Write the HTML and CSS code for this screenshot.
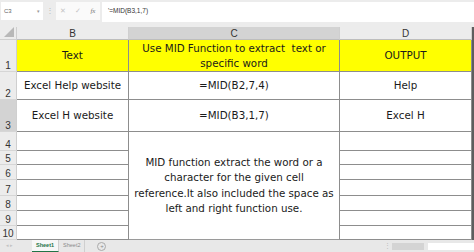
FILE: index.html
```html
<!DOCTYPE html>
<html lang="en">
<head>
    <meta charset="UTF-8">
    <title>MID Function</title>
    <link rel="stylesheet" href="styles.css">
</head>
<body>
    <div class="app">
        <div class="formula-bar">
            <div class="name-box"><span>C3</span><span class="caret">▾</span></div>
            <div class="grip">⋮</div>
            <div class="fx-buttons"><span>✕</span><span>✓</span><span class="fx">fx</span></div>
            <div class="formula">'=MID(B3,1,7)</div>
        </div>

        <div class="sheet">
            <div class="corner"><span class="tri"></span></div>
            <div class="col-head">B</div>
            <div class="col-head selected">C</div>
            <div class="col-head">D</div>

            <div class="row-head">1</div>
            <div class="cell yellow">Text</div>
            <div class="cell yellow">Use MID Function to extract&nbsp; text or<br>specific word</div>
            <div class="cell yellow">OUTPUT</div>

            <div class="row-head">2</div>
            <div class="cell">Excel Help website</div>
            <div class="cell">=MID(B2,7,4)</div>
            <div class="cell">Help</div>

            <div class="row-head selected">3</div>
            <div class="cell">Excel H website</div>
            <div class="cell">=MID(B3,1,7)</div>
            <div class="cell">Excel H</div>

            <div class="row-head">4</div>
            <div class="cell"></div>
            <div class="cell merged">MID function extract the word or a<br>character for the given cell<br>reference.It also included the space as<br>left and right function use.</div>
            <div class="cell"></div>

            <div class="row-head">5</div>
            <div class="cell"></div>
            <div class="cell"></div>
            <div class="row-head">6</div>
            <div class="cell"></div>
            <div class="cell"></div>
            <div class="row-head">7</div>
            <div class="cell"></div>
            <div class="cell"></div>
            <div class="row-head">8</div>
            <div class="cell"></div>
            <div class="cell"></div>
            <div class="row-head">9</div>
            <div class="cell"></div>
            <div class="cell"></div>
            <div class="row-head">10</div>
            <div class="cell"></div>
            <div class="cell"></div>
        </div>

        <div class="tabs">
            <div class="nav">&#9666; &#9656;</div>
            <div class="tab active">Sheet1</div>
            <div class="tab">Sheet2</div>
            <div class="add">+</div>
            <div class="spacer"></div>
            <div class="scroll"><span class="grip2">⋮</span><span class="thumb"></span><span class="track"></span></div>
        </div>
    </div>
</body>
</html>
```

FILE: styles.css
```css
body {
    margin: 0;
    padding: 0;
    font-family: "DejaVu Sans", sans-serif;
    background: #fff;
}

.app {
    width: 474px;
    height: 252px;
    overflow: hidden;
    display: flex;
    flex-direction: column;
}

/* formula bar */
.formula-bar {
    height: 27px;
    box-sizing: border-box;
    background: #ececec;
    display: flex;
    align-items: flex-start;
    padding-top: 2px;
    font-family: "Liberation Sans", sans-serif;
    color: #666;
}
.name-box {
    width: 42px;
    height: 18px;
    margin-left: 1px;
    background: #fff;
    display: flex;
    align-items: center;
    justify-content: space-between;
    padding: 0 3px;
    box-sizing: border-box;
    font-size: 6px;
}
.caret {
    font-size: 5px;
    color: #999;
}
.grip {
    width: 13px;
    text-align: center;
    font-size: 8px;
    line-height: 18px;
    color: #bbb;
}
.fx-buttons {
    width: 44px;
    height: 18px;
    background: #fafafa;
    display: flex;
    align-items: center;
    justify-content: space-around;
    font-size: 7px;
    color: #c4c4c4;
}
.fx-buttons .fx {
    font-family: "Liberation Serif", serif;
    font-style: italic;
    color: #777;
}
.formula {
    flex: 1;
    height: 20px;
    margin-left: 2px;
    background: #fff;
    font-size: 6.5px;
    padding: 5px 0 0 6px;
    box-sizing: border-box;
    color: #333;
}

/* grid */
.sheet {
    display: grid;
    grid-template-columns: 17px 112px 211px 132px;
    grid-template-rows: 13px 32px 28px 32px 19px 14px 15px 16px 15px 15px 14px;
    border-right: 2px solid #5e5e5e;
    width: 474px;
    box-sizing: border-box;
}
.corner {
    background: #ececec;
    border-right: 1px solid #cfcfcf;
    border-bottom: 1px solid #cfcfcf;
    position: relative;
}
.tri {
    position: absolute;
    right: 2px;
    bottom: 2px;
    border-left: 10px solid transparent;
    border-bottom: 10px solid #b8b8b8;
}
.col-head {
    background: #ececec;
    border-right: 1px solid #cfcfcf;
    border-bottom: 1px solid #bdbdbd;
    font-family: "Liberation Sans", sans-serif;
    font-size: 10px;
    color: #333;
    text-align: center;
    line-height: 13px;
}
.col-head.selected {
    background: #d3d3d3;
}
.row-head {
    background: #ececec;
    border-right: 1px solid #cfcfcf;
    border-bottom: 1px solid #d6d6d6;
    font-family: "Liberation Sans", sans-serif;
    font-size: 10px;
    color: #333;
    text-align: center;
    display: flex;
    align-items: flex-end;
    justify-content: center;
    box-sizing: border-box;
}
.row-head.selected {
    background: #d3d3d3;
}
.cell {
    border-right: 1px solid #8d8d8d;
    border-bottom: 1px solid #8d8d8d;
    font-size: 10.3px;
    color: #1a1a1a;
    display: flex;
    align-items: center;
    justify-content: center;
    text-align: center;
    line-height: 15px;
}
.yellow {
    background: #ffff00;
}
.merged {
    grid-row: span 7;
    border-bottom: 1px solid #9a9a9a;
    line-height: 15.5px;
}

/* sheet tabs */
.tabs {
    flex: 1;
    background: #e8e8e8;
    display: flex;
    align-items: stretch;
    font-family: "Liberation Sans", sans-serif;
    font-size: 5.5px;
    color: #8a8a8a;
}
.nav {
    width: 32px;
    font-size: 5px;
    color: #c2c2c2;
    padding-left: 6px;
    line-height: 11px;
    box-sizing: border-box;
}
.tab {
    padding: 0 4px;
    line-height: 11px;
    border-right: 1px solid #cfcfcf;
}
.tab.active {
    background: #f7f7f7;
    color: #217346;
    font-weight: bold;
    border-bottom: 1px solid #217346;
}
.add {
    margin-left: 12px;
    width: 7px;
    height: 7px;
    margin-top: 2px;
    border: 1px solid #aaa;
    border-radius: 50%;
    font-size: 6px;
    line-height: 7px;
    text-align: center;
}
.spacer {
    flex: 1;
}
.scroll {
    width: 90px;
    display: flex;
    align-items: center;
}
.grip2 {
    font-size: 7px;
    color: #bbb;
    width: 8px;
}
.thumb {
    width: 32px;
    height: 7px;
    background: #d4d4d4;
}
.track {
    flex: 1;
    height: 7px;
    background: #fff;
    margin-left: 4px;
}
```
